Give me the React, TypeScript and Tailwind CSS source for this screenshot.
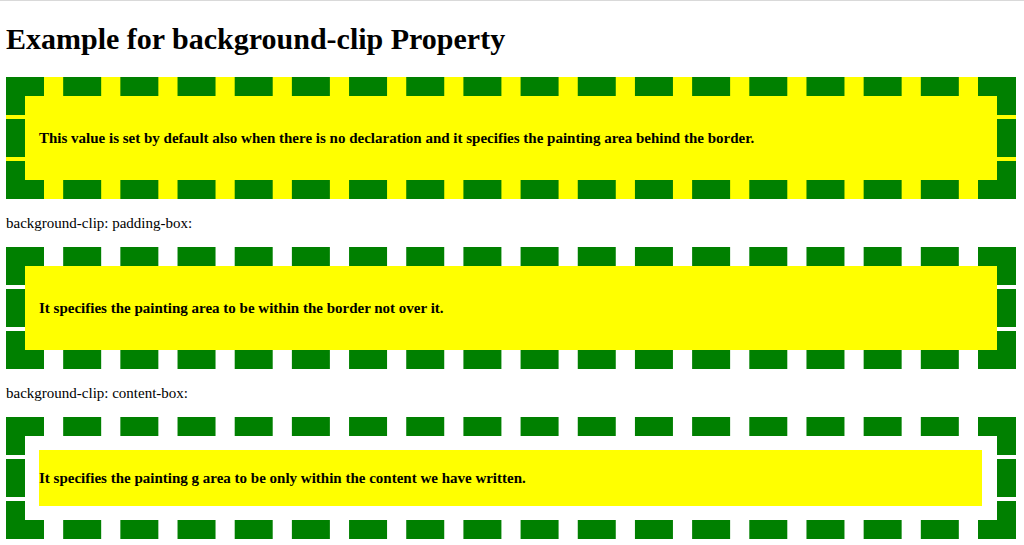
export default function App() {
  const boxBase =
    'ml-[6px] mr-[8px] border-[19px] border-dashed border-[#008000] bg-[#ffff00] pl-[14px] pr-[15px] py-[14px]';

  return (
    <div className="min-h-[545px] border-t border-[#d9d9d9] bg-white font-['Liberation_Serif',serif] text-black">
      <h1 className="ml-[6px] mt-[21px] mb-[21px] text-[30px] font-bold leading-[34px]">
        Example for background-clip Property
      </h1>

      {/* border-box */}
      <div className={boxBase}>
        <div className="flex h-[56px] items-center text-[15px] font-bold">
          This value is set by default also when there is no declaration and it specifies the painting area behind the border.
        </div>
      </div>

      <p className="ml-[6px] mt-[16px] mb-[15px] text-[15px] leading-[17px]">background-clip: padding-box:</p>

      <div className={boxBase + ' bg-clip-padding'}>
        <div className="flex h-[56px] items-center text-[15px] font-bold">
          It specifies the painting area to be within the border not over it.
        </div>
      </div>

      <p className="ml-[6px] mt-[16px] mb-[15px] text-[15px] leading-[17px]">background-clip: content-box:</p>

      <div className={boxBase + ' bg-clip-content'}>
        <div className="flex h-[56px] items-center text-[15px] font-bold">
          It specifies the painting g area to be only within the content we have written.
        </div>
      </div>
    </div>
  );
}
